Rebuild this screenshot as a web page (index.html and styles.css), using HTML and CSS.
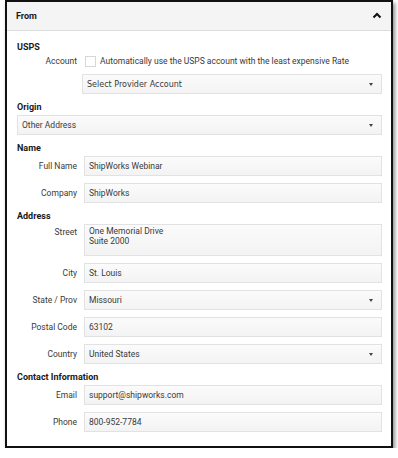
FILE: index.html
```html
<!DOCTYPE html>
<html>
<head>
<meta charset="utf-8">
<link rel="stylesheet" href="styles.css">
</head>
<body>
<div class="panel">
  <div class="panel-head">
    <span class="title">From</span>
    <svg class="chev" width="10" height="7" viewBox="0 0 10 7"><polyline points="1.5,5.5 5,2 8.5,5.5" fill="none" stroke="#111" stroke-width="2"/></svg>
  </div>
  <div class="panel-body">
    <div class="section">
      <div class="heading">USPS</div>
      <div class="row check-row">
        <span class="label">Account</span>
        <span class="check"></span>
        <span class="check-text">Automatically use the USPS account with the least expensive Rate</span>
      </div>
      <div class="row">
        <span class="label"></span>
        <div class="box select provider"><span>Select Provider Account</span><i class="arrow"></i></div>
      </div>
    </div>
    <div class="section">
      <div class="heading">Origin</div>
      <div class="box select wide"><span>Other Address</span><i class="arrow"></i></div>
    </div>
    <div class="section">
      <div class="heading">Name</div>
      <div class="row"><span class="label">Full Name</span><div class="box">ShipWorks Webinar</div></div>
      <div class="row"><span class="label">Company</span><div class="box">ShipWorks</div></div>
    </div>
    <div class="section">
      <div class="heading">Address</div>
      <div class="row top"><span class="label">Street</span><div class="box area">One Memorial Drive<br>Suite 2000</div></div>
      <div class="row"><span class="label">City</span><div class="box">St. Louis</div></div>
      <div class="row"><span class="label">State / Prov</span><div class="box select"><span>Missouri</span><i class="arrow"></i></div></div>
      <div class="row"><span class="label">Postal Code</span><div class="box">63102</div></div>
      <div class="row"><span class="label">Country</span><div class="box select"><span>United States</span><i class="arrow"></i></div></div>
    </div>
    <div class="section">
      <div class="heading">Contact Information</div>
      <div class="row"><span class="label">Email</span><div class="box">support@shipworks.com</div></div>
      <div class="row"><span class="label">Phone</span><div class="box">800-952-7784</div></div>
    </div>
  </div>
</div>
</body>
</html>
```
FILE: styles.css
```css
html, body {
  margin: 0;
  padding: 0;
  background: #fff;
}
body {
  font-family: Roboto, "Liberation Sans", sans-serif;
  font-size: 8.5px;
  color: #3a3a3a;
  padding: 0 0 0 5px;
}
.panel {
  width: 388px;
  height: 448px;
  border: 2px solid #111;
  box-sizing: border-box;
  box-shadow: 2px 3px 4px rgba(0,0,0,0.45);
  background: #fff;
  display: flex;
  flex-direction: column;
}
.panel-head {
  height: 29px;
  background: #f4f4f4;
  border-bottom: 1px solid #dcdcdc;
  display: flex;
  align-items: center;
  justify-content: space-between;
  padding: 0 9px 0 9px;
  box-sizing: border-box;
  flex: none;
}
.title {
  font-weight: bold;
  font-size: 9px;
  color: #1a1a1a;
}
.chev { margin-top: -1px; }
.panel-body {
  padding: 10px 9px 0 10px;
  display: flex;
  flex-direction: column;
  gap: 7px;
}
.section {
  display: flex;
  flex-direction: column;
  gap: 7px;
}
.heading {
  font-weight: bold;
  font-size: 9px;
  color: #1a1a1a;
  height: 12px;
  line-height: 13px;
  margin-bottom: -5px;
}
.row {
  display: flex;
  align-items: center;
  gap: 7px;
}
.row.top { align-items: flex-start; }
.row.top .label { padding-top: 3px; }
.label {
  width: 60px;
  flex: none;
  text-align: right;
  white-space: nowrap;
}
.check-row { height: 12px; gap: 0; }
.check-row .label { margin-right: 8px; }
.check {
  width: 9px;
  height: 9px;
  border: 1px solid #d6d6d6;
  background: #fff;
  margin-right: 4px;
  flex: none;
}
.check-text { white-space: nowrap; }
.box {
  flex: 1;
  height: 20px;
  box-sizing: border-box;
  border: 1px solid #e2e2e2;
  background: linear-gradient(#fbfbfb, #f3f3f3);
  padding: 0 4px;
  display: flex;
  align-items: center;
  white-space: nowrap;
}
.box.area {
  height: 32px;
  display: block;
  padding-top: 1px;
  line-height: 10px;
}
.select {
  justify-content: space-between;
  padding-right: 8px;
}
.provider {
  margin-left: -2px;
  font-family: "DejaVu Sans", sans-serif;
  font-size: 8px;
}
.wide { flex: none; }
.arrow {
  width: 0;
  height: 0;
  border-left: 2.5px solid transparent;
  border-right: 2.5px solid transparent;
  border-top: 3px solid #444;
}
```
